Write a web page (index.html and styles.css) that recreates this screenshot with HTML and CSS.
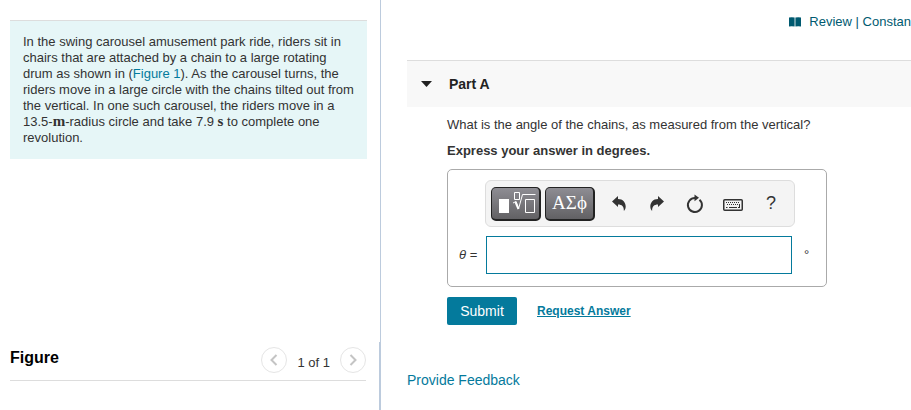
FILE: index.html
```html
<!DOCTYPE html>
<html lang="en">
<head>
  <meta charset="UTF-8" />
  <meta name="viewport" content="width=device-width, initial-scale=1.0" />
  <title>Swing Carousel</title>
  <link rel="stylesheet" href="styles.css">
</head>
<body>
  <div class="page">
    <!-- Left side: problem and figure -->
    <aside class="sidebar">
      <section class="intro">
        <p class="problem-text">In the swing carousel amusement park ride, riders sit in chairs that are attached by a chain to a large rotating drum as shown in (<a href="#figure">Figure 1</a>). As the carousel turns, the riders move in a large circle with the chains tilted out from the vertical. In one such carousel, the riders move in a 13.5-<span class="unit">m</span>-radius circle and take 7.9 <span class="unit">s</span> to complete one revolution.</p>
      </section>

      <section class="figure" id="figure">
        <div class="figure-header">
          <h2>Figure</h2>
          <div class="pager">
            <button class="pager-btn" type="button" aria-label="Previous figure">
              <svg width="10" height="12" viewBox="0 0 10 12"><path d="M7.500 1 2.500 6l5 5" /></svg>
            </button>
            <span class="pager-count">1 of 1</span>
            <button class="pager-btn" type="button" aria-label="Next figure">
              <svg width="10" height="12" viewBox="0 0 10 12"><path d="M2.500 1l5 5-5 5" /></svg>
            </button>
          </div>
        </div>
      </section>
    </aside>

    <!-- Right side: question part -->
    <main class="content">
      <nav class="top-links">
        <svg class="book" width="12" height="10" viewBox="0 0 12 10">
          <path d="M0 .5Q3-.2 5.600.6V9.600Q3 8.800 0 9.500zM6.400.6Q9-.2 12 .5V9.500Q9 8.800 6.400 9.600z" />
        </svg>
        <span><a href="#review">Review</a> | <a href="#constants">Constan</a></span>
      </nav>

      <div class="part-header">
        <button class="toggle" type="button" aria-label="Collapse Part A">
          <svg width="11" height="6" viewBox="0 0 11 6"><path d="M0 0h11L5.500 6z" /></svg>
        </button>
        <h3>Part A</h3>
      </div>

      <form class="part-body">
        <p>What is the angle of the chains, as measured from the vertical?</p>
        <p class="instructions">Express your answer in degrees.</p>

        <div class="answer-box">
          <div class="toolbar">
            <button class="math-btn" type="button" aria-label="Templates">
              <svg width="40" height="24" viewBox="0 0 40 24">
                <path class="solid" d="M3 8h10v14H3z" />
                <path class="thin" d="M18.500 1.500h5v7h-5z" />
                <path class="line" d="M17 12l3-1.500 2.500 7.500L26.500 3.500H39.500" />
                <path class="vee" d="M19.500 11l3 7" />
                <path class="thin" d="M29.500 8.500h9v13h-9z" />
              </svg>
            </button>
            <button class="math-btn" type="button">ΑΣϕ</button>
            <button class="tool-btn" type="button" aria-label="Undo">
              <svg width="14" height="16" viewBox="0 0 14 16"><path d="M0 5.500 6 0v3c5 0 7.700 3.600 7.700 7.500 0 1.700-.6 3.500-1.800 4.500C12 10.500 10 8.500 6 8.500V11z" /></svg>
            </button>
            <button class="tool-btn" type="button" aria-label="Redo">
              <svg width="14" height="16" viewBox="0 0 14 16"><path d="M14 5.500 8 0v3C3 3 .3 6.600.3 10.500c0 1.700.6 3.500 1.800 4.500C2 10.500 4 8.500 8 8.500V11z" /></svg>
            </button>
            <button class="tool-btn" type="button" aria-label="Reset">
              <svg width="18" height="20" viewBox="0 0 18 20">
                <path class="stroke" d="M13.500 5.700A7 7 0 1 1 9 4" />
                <path d="M8.500.5l4.500 3.300-4.500 3.500z" />
              </svg>
            </button>
            <button class="tool-btn keyboard" type="button" aria-label="Keyboard shortcuts">
              <svg width="20" height="12" viewBox="0 0 20 12">
                <rect class="frame" x=".75" y=".75" width="18.500" height="10.500" rx="1" />
                <path class="keys" d="M3 3.500h14M4 5.500h13" />
                <path class="space" d="M3 8.500h1.500M6 8.500h8M15 8.500h2M16.500 5v4" />
              </svg>
            </button>
            <button class="tool-btn help" type="button">?</button>
          </div>
          <div class="answer-row">
            <label for="answer"><i>θ</i> =</label>
            <input type="text" id="answer" autocomplete="off">
            <span class="degree">°</span>
          </div>
        </div>

        <div class="actions">
          <button class="submit" type="button">Submit</button>
          <a class="request" href="#request">Request Answer</a>
        </div>
      </form>

      <a class="feedback" href="#feedback">Provide Feedback</a>
    </main>
  </div>
</body>
</html>
```
FILE: styles.css
```css
* {
  box-sizing: border-box;
}

body {
  margin: 0;
  font-family: "Liberation Sans", Arial, sans-serif;
  font-size: 13px;
  line-height: 16px;
  color: #333;
  background: #fff;
}

h2,
h3,
p {
  margin: 0;
}

a {
  color: #047a9c;
  text-decoration: none;
}

a:hover {
  text-decoration: underline;
}

button {
  font-family: inherit;
  padding: 0;
  border: none;
  background: none;
  cursor: pointer;
}

svg {
  display: block;
}

.page {
  display: grid;
  grid-template-columns: 381px minmax(0, 1fr);
  min-height: 100vh;
}

/* Left side */
.sidebar {
  display: grid;
  grid-template-rows: 5fr 1fr;
}

.intro {
  padding: 20px 13px 0 10px;
  border-right: 1px solid #bccbdd;
}

.problem-text {
  padding: 13px 12px 13px 13px;
  border-top: 1px solid #ddd;
  background: #e6f6f7;
}

.unit {
  font-family: "Liberation Serif", "Times New Roman", serif;
  font-size: 15px;
  font-weight: bold;
  line-height: 1;
}

.figure {
  padding: 5px 13px 0 10px;
  border-right: 2px solid #bccbdd;
}

.figure-header {
  display: flex;
  justify-content: space-between;
  padding-bottom: 7px;
  border-bottom: 1px solid #ddd;
}

.figure-header h2 {
  padding-top: 3px;
  font-size: 16px;
  color: #000;
}

.pager {
  display: flex;
  gap: 10px;
}

.pager-btn {
  display: flex;
  align-items: center;
  justify-content: center;
  width: 26px;
  height: 26px;
  border: 1px solid #e5e5e5;
  border-radius: 50%;
}

.pager-btn path {
  fill: none;
  stroke: #c4c4c4;
  stroke-width: 2;
}

.pager-count {
  padding-top: 8px;
}

/* Right side */
.content {
  padding: 14px 0 20px 26px;
}

.top-links {
  display: flex;
  justify-content: flex-end;
  align-items: center;
  gap: 8px;
  white-space: nowrap;
  color: #005a70;
}

.top-links a {
  color: #005a70;
}

.book {
  fill: #005a70;
}

.part-header {
  display: flex;
  align-items: center;
  gap: 17px;
  height: 47px;
  margin-top: 30px;
  padding-left: 14px;
  border-top: 1px solid #ddd;
  background: #f8f8f8;
}

.part-header h3 {
  font-size: 14px;
  color: #222;
}

.toggle path {
  fill: #222;
}

.part-body {
  padding: 10px 40px 0;
}

.instructions {
  margin-top: 10px;
  font-weight: bold;
}

.answer-box {
  max-width: 380px;
  margin-top: 10px;
  padding: 10px 31px 12px 10px;
  border: 1px solid #aaa;
  border-radius: 5px;
}

.toolbar {
  display: flex;
  align-items: center;
  gap: 4px;
  height: 47px;
  margin-left: 27px;
  padding-left: 5px;
  border: 1px solid #ddd;
  border-radius: 6px;
  background: #f4f4f4;
}

.math-btn {
  display: flex;
  align-items: center;
  justify-content: center;
  width: 50px;
  height: 34px;
  border: 1px solid #222;
  border-width: 1px 2px 2px 1px;
  border-radius: 5px;
  background: linear-gradient(#8e8d93, #626164);
  color: #fff;
  font-family: "Liberation Serif", "Times New Roman", serif;
  font-size: 19px;
}

.math-btn .solid {
  fill: #fff;
}

.math-btn .line,
.math-btn .thin,
.math-btn .vee {
  fill: none;
  stroke: #fff;
}

.math-btn .vee {
  stroke-width: 2;
}

.tool-btn {
  display: flex;
  align-items: center;
  justify-content: center;
  width: 34px;
  height: 34px;
  color: #333;
  fill: #333;
}

.math-btn + .tool-btn {
  margin-left: 3px;
}

.tool-btn .stroke {
  fill: none;
  stroke: #333;
  stroke-width: 2;
}

.keyboard {
  padding-top: 3px;
}

.keyboard .frame {
  fill: none;
  stroke: #333;
  stroke-width: 1.5;
}

.keyboard .keys {
  stroke: #333;
  stroke-dasharray: 1 1;
}

.keyboard .space {
  stroke: #333;
}

.help {
  font-size: 18px;
}

.answer-row {
  display: flex;
  align-items: center;
  margin-top: 9px;
}

.answer-row label {
  width: 28px;
  padding-left: 1px;
}

.answer-row input {
  flex: 1;
  min-width: 0;
  height: 38px;
  margin-right: 3px;
  padding: 0 8px;
  border: 1px solid #047a9c;
  font-size: 16px;
}

.degree {
  width: 0;
  margin-left: 9px;
  margin-right: -9px;
}

.actions {
  display: flex;
  align-items: center;
  gap: 20px;
  margin-top: 10px;
}

.submit {
  width: 70px;
  height: 28px;
  border-radius: 2px;
  background: #047a9c;
  color: #fff;
  font-size: 14px;
}

.request {
  font-size: 12px;
  font-weight: bold;
  text-decoration: underline;
}

.feedback {
  display: inline-block;
  margin-top: 47px;
  font-size: 14px;
}
```
